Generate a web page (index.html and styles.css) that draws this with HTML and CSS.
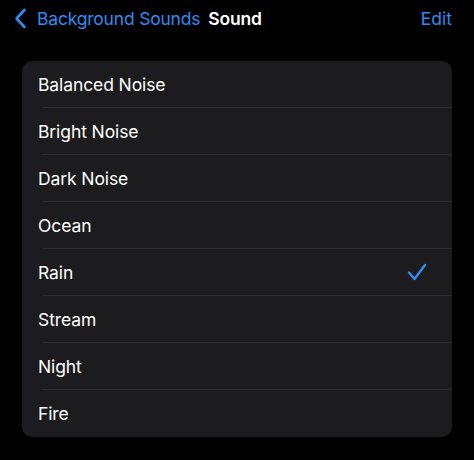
FILE: index.html
```html
<!DOCTYPE html>
<html lang="en">
  <head>
    <meta charset="UTF-8" />
    <meta name="viewport" content="width=device-width, initial-scale=1.0" />
    <title>Sound</title>
    <link rel="stylesheet" href="styles.css">
  </head>
  <body>
    <div class="nav_bar">
      <a class="back" href="#">
        <svg class="chevron" width="13" height="21" viewBox="0 0 13 21">
          <path d="M10.5 2 L2.5 10.5 L10.5 19" fill="none" stroke="currentColor" stroke-width="2.6" stroke-linecap="round" stroke-linejoin="round" />
        </svg>
        <span>Background Sounds</span>
      </a>
      <div class="nav_title">Sound</div>
      <a class="edit" href="#">Edit</a>
    </div>

    <ul class="sound_list">
      <li class="row">Balanced Noise</li>
      <li class="row">Bright Noise</li>
      <li class="row">Dark Noise</li>
      <li class="row">Ocean</li>
      <li class="row selected">
        Rain
        <svg class="check" width="20" height="18" viewBox="0 0 20 18">
          <path d="M2 9.5 L7.5 16 L18 2" fill="none" stroke="currentColor" stroke-width="2.4" stroke-linecap="round" stroke-linejoin="round" />
        </svg>
      </li>
      <li class="row">Stream</li>
      <li class="row">Night</li>
      <li class="row">Fire</li>
    </ul>
  </body>
</html>
```

FILE: styles.css
```css
body {
  margin: 0;
  background-color: #000;
  color: #fff;
  font-family: Inter, "Noto Sans", sans-serif;
  height: 460px;
  overflow: hidden;
}

.nav_bar {
  display: flex;
  align-items: center;
  height: 36px;
  padding: 0 22px 0 14px;
  font-size: 17.5px;
}

.back {
  display: flex;
  align-items: center;
  gap: 10px;
  color: #2d8cf0;
  text-decoration: none;
  letter-spacing: -0.2px;
}

.nav_title {
  margin-left: 8px;
  font-weight: 600;
  letter-spacing: -0.2px;
}

.edit {
  margin-left: auto;
  color: #2d8cf0;
  text-decoration: none;
}

.sound_list {
  list-style: none;
  margin: 25px 22px 0 22px;
  padding: 0;
  background-color: #1c1c1e;
  border-radius: 10px;
  overflow: hidden;
}

/* separator starts a little right of the label, like the screenshot */
.row {
  display: flex;
  align-items: center;
  justify-content: space-between;
  height: 47px;
  padding: 0 25px 1px 16px;
  font-size: 17.5px;
  letter-spacing: -0.1px;
  background: linear-gradient(#2c2c2e, #2c2c2e) no-repeat 21px 100% / calc(100% - 21px) 1px;
  box-sizing: border-box;
}

.row:last-child {
  background: none;
}

.check {
  color: #2d8cf0;
}
```
